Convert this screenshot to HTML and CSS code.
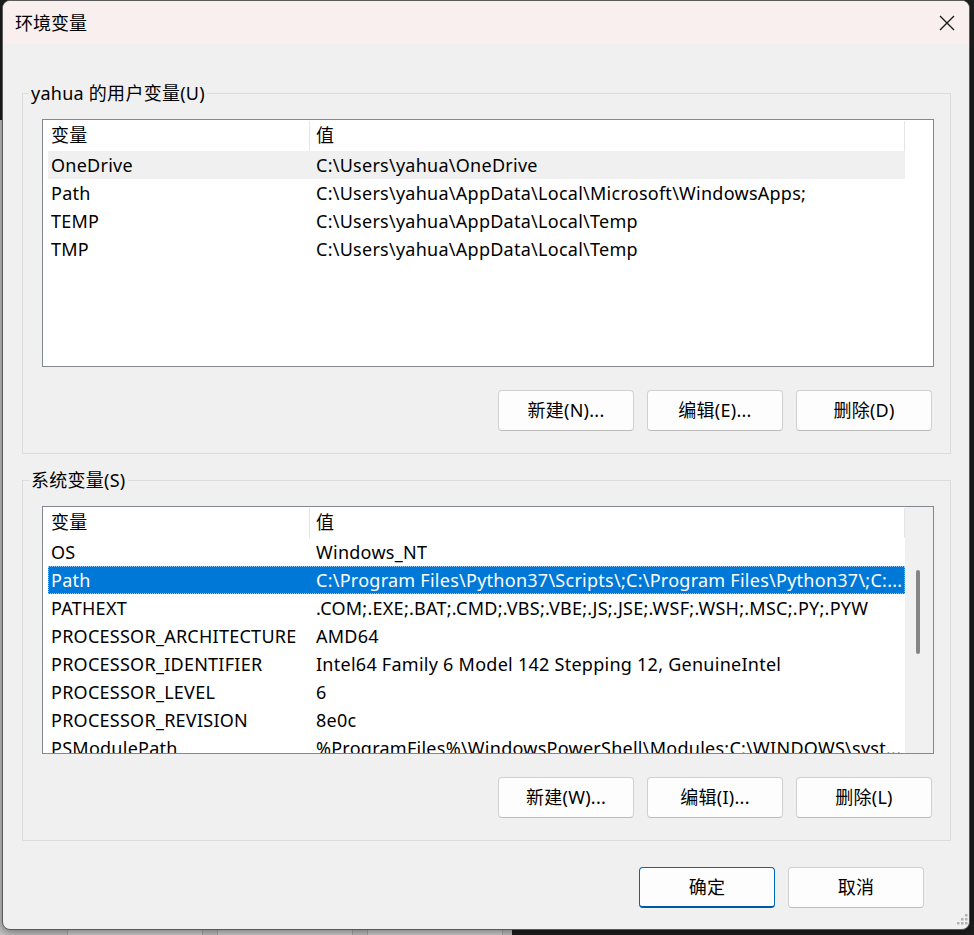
FILE: index.html
```html
<!DOCTYPE html>
<html>
<head lang="zh-CN">
    <meta charset="UTF-8">
    <title>环境变量</title>
    <link rel="stylesheet" href="styles.css">
</head>
<body>
<div class="desktop">
    <!-- 后面那个被遮住的窗口 -->
    <div class="backwin">
        <div class="backwin-buttons">
            <div class="back-btn">确定</div>
            <div class="back-btn">取消</div>
            <div class="back-btn">应用(A)</div>
        </div>
    </div>

    <div class="dialog">
        <div class="dialog-title">
            <span>环境变量</span>
            <svg class="close-icon" width="16" height="16" viewBox="0 0 16 16">
                <path d="M1 1 L15 15 M15 1 L1 15" stroke="#1b1b1b" stroke-width="1.4" fill="none"/>
            </svg>
        </div>

        <div class="dialog-body">
            <fieldset class="group">
                <legend>yahua 的用户变量(U)</legend>
                <div class="list">
                    <div class="list-main">
                        <div class="list-header">
                            <div class="hcell hcell-name">变量</div>
                            <div class="hcell hcell-value">值</div>
                        </div>
                        <div class="row row-hover">
                            <div class="cell-name">OneDrive</div>
                            <div class="cell-value">C:\Users\yahua\OneDrive</div>
                        </div>
                        <div class="row">
                            <div class="cell-name">Path</div>
                            <div class="cell-value">C:\Users\yahua\AppData\Local\Microsoft\WindowsApps;</div>
                        </div>
                        <div class="row">
                            <div class="cell-name">TEMP</div>
                            <div class="cell-value">C:\Users\yahua\AppData\Local\Temp</div>
                        </div>
                        <div class="row">
                            <div class="cell-name">TMP</div>
                            <div class="cell-value">C:\Users\yahua\AppData\Local\Temp</div>
                        </div>
                    </div>
                    <div class="list-scroll"></div>
                </div>
                <div class="btn-row">
                    <a class="btn" href="javascript:void(0);">新建(N)...</a>
                    <a class="btn" href="javascript:void(0);">编辑(E)...</a>
                    <a class="btn" href="javascript:void(0);">删除(D)</a>
                </div>
            </fieldset>

            <fieldset class="group group-sys">
                <legend>系统变量(S)</legend>
                <div class="list">
                    <div class="list-main">
                        <div class="list-header">
                            <div class="hcell hcell-name">变量</div>
                            <div class="hcell hcell-value">值</div>
                        </div>
                        <div class="row">
                            <div class="cell-name">OS</div>
                            <div class="cell-value">Windows_NT</div>
                        </div>
                        <div class="row row-selected">
                            <div class="cell-name">Path</div>
                            <div class="cell-value">C:\Program Files\Python37\Scripts\;C:\Program Files\Python37\;C:...</div>
                        </div>
                        <div class="row">
                            <div class="cell-name">PATHEXT</div>
                            <div class="cell-value">.COM;.EXE;.BAT;.CMD;.VBS;.VBE;.JS;.JSE;.WSF;.WSH;.MSC;.PY;.PYW</div>
                        </div>
                        <div class="row">
                            <div class="cell-name">PROCESSOR_ARCHITECTURE</div>
                            <div class="cell-value">AMD64</div>
                        </div>
                        <div class="row">
                            <div class="cell-name">PROCESSOR_IDENTIFIER</div>
                            <div class="cell-value">Intel64 Family 6 Model 142 Stepping 12, GenuineIntel</div>
                        </div>
                        <div class="row">
                            <div class="cell-name">PROCESSOR_LEVEL</div>
                            <div class="cell-value">6</div>
                        </div>
                        <div class="row">
                            <div class="cell-name">PROCESSOR_REVISION</div>
                            <div class="cell-value">8e0c</div>
                        </div>
                        <div class="row">
                            <div class="cell-name">PSModulePath</div>
                            <div class="cell-value">%ProgramFiles%\WindowsPowerShell\Modules;C:\WINDOWS\syst...</div>
                        </div>
                    </div>
                    <div class="list-scroll list-scroll-track">
                        <div class="scroll-thumb"></div>
                    </div>
                </div>
                <div class="btn-row">
                    <a class="btn" href="javascript:void(0);">新建(W)...</a>
                    <a class="btn" href="javascript:void(0);">编辑(I)...</a>
                    <a class="btn" href="javascript:void(0);">删除(L)</a>
                </div>
            </fieldset>

            <div class="footer">
                <a class="btn btn-default" href="javascript:void(0);">确定</a>
                <a class="btn" href="javascript:void(0);">取消</a>
            </div>
        </div>

        <!-- 右下角拖动缩放的小点 -->
        <svg class="grip" width="12" height="12" viewBox="0 0 12 12">
            <rect x="9" y="1" width="2.5" height="2.5" fill="#b2b2b2"/>
            <rect x="5" y="5" width="2.5" height="2.5" fill="#b2b2b2"/>
            <rect x="9" y="5" width="2.5" height="2.5" fill="#b2b2b2"/>
            <rect x="1" y="9" width="2.5" height="2.5" fill="#b2b2b2"/>
            <rect x="5" y="9" width="2.5" height="2.5" fill="#b2b2b2"/>
            <rect x="9" y="9" width="2.5" height="2.5" fill="#b2b2b2"/>
        </svg>
    </div>
</div>
</body>
</html>
```

FILE: styles.css
```css
* {
    box-sizing: border-box;
}
body {
    margin: 0;
    background: #1f1f1f;
    font-family: "Noto Sans", "Noto Sans CJK SC", sans-serif;
    font-size: 18px;
    letter-spacing: 0.26px;
    color: #000000;
}
a {
    text-decoration: none;
    color: #000000;
}
.desktop {
    position: relative;
    width: 974px;
    height: 935px;
    overflow: hidden;
}

/* 后面的窗口 */
.backwin {
    position: absolute;
    left: -10px;
    top: 120px;
    width: 522px;
    height: 840px;
    background: #c4c4c4;
    padding-top: 809px;
}
.backwin-buttons {
    display: flex;
    gap: 14px;
    padding-left: 77px;
}
.back-btn {
    width: 136px;
    height: 40px;
    line-height: 30px;
    text-align: center;
    background: #d0d0d0;
    border: 1px solid #ababab;
    color: #1a1a1a;
}

/* 对话框 */
.dialog {
    position: absolute;
    left: 2px;
    top: 0px;
    width: 968px;
    height: 930px;
    background: #f0f0f0;
    border: 1px solid #5a5a5a;
    border-radius: 8px;
    overflow: hidden;
    box-shadow: 0px 2px 10px rgba(0, 0, 0, 0.45);
}
.dialog-title {
    height: 43px;
    background: #f8efee;
    display: flex;
    align-items: center;
    justify-content: space-between;
    padding: 0px 14px 0px 12px;
    line-height: 24px;
    letter-spacing: 0px;
}
.close-icon {
    display: block;
}
.dialog-body {
    padding: 0px 18px 0px 19px;
}

/* 分组框 */
.group {
    margin: 37px 0px 0px 0px;
    padding: 14px 16px 22px 19px;
    border: 1px solid #dcdcdc;
    min-width: 0px;
}
.group legend {
    margin-left: -13px;
    padding: 0px 2px;
    line-height: 24px;
}
.group-sys {
    margin-top: 14px;
}

/* 列表 */
.list {
    height: 248px;
    border: 1px solid #828790;
    background: #ffffff;
    display: flex;
    overflow: hidden;
}
.list-main {
    width: 862px;
    flex-shrink: 0;
    overflow: hidden;
}
.list-scroll {
    flex: 1;
}
.list-scroll-track {
    background: #f0f0f0;
    padding: 63px 0px 0px 11px;
}
.scroll-thumb {
    width: 4px;
    height: 84px;
    border-radius: 2px;
    background: #858585;
}
.list-header {
    display: flex;
    height: 31px;
}
.hcell {
    border-right: 1px solid #e5e5e5;
    margin-top: 1px;
    line-height: 28px;
}
.hcell-name {
    width: 267px;
    padding-left: 8px;
}
.hcell-value {
    width: 595px;
    padding-left: 6px;
}
.row {
    display: flex;
    height: 28px;
    line-height: 28px;
    margin-left: 5px;
    white-space: nowrap;
}
.cell-name {
    width: 262px;
    padding-left: 3px;
    overflow: hidden;
}
.cell-value {
    width: 595px;
    padding-left: 6px;
    overflow: hidden;
}
.row-hover {
    background: #f0f0f0;
}
.row-selected {
    background: #0078d7;
    color: #ffffff;
    outline: 1px dotted #9cc8f0;
    outline-offset: -1px;
}

/* 按钮 */
.btn-row {
    display: flex;
    justify-content: flex-end;
    gap: 13px;
    margin-top: 23px;
    padding-right: 2px;
}
.btn {
    display: block;
    width: 136px;
    height: 41px;
    line-height: 39px;
    text-align: center;
    background: #fdfdfd;
    border: 1px solid #d0d0d0;
    border-bottom-color: #bcbcbc;
    border-radius: 4px;
    font-size: 18px;
}
.btn-default {
    border: 1px solid #0067c0;
    border-bottom: 2px solid #0058a8;
    line-height: 38px;
}
.footer {
    display: flex;
    justify-content: flex-end;
    gap: 13px;
    margin-top: 26px;
    padding-right: 27px;
}
.grip {
    position: absolute;
    right: 1px;
    bottom: 4px;
}
```
